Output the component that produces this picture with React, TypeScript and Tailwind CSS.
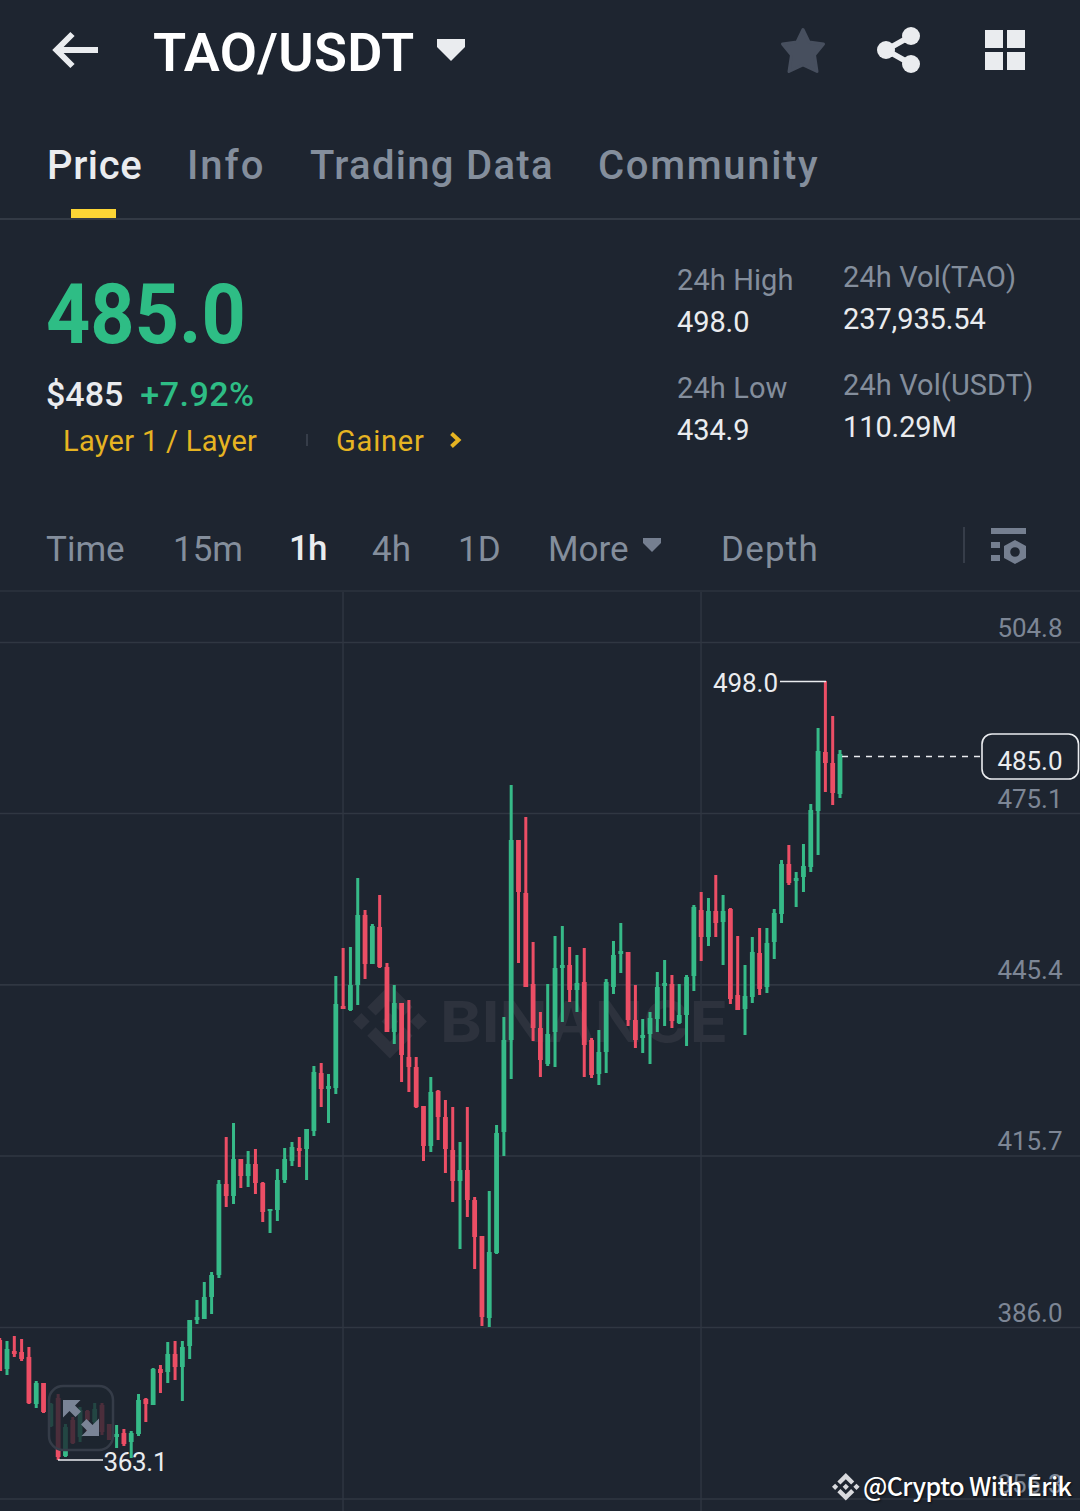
type Candle = [up: 0 | 1, high: number, low: number, top: number, bottom: number];

// one entry per hour: direction, wick range, body range
const candles: Candle[] = [
  [0, 1338, 1371, 1340, 1371],
  [1, 1341, 1375, 1349, 1369],
  [0, 1336, 1357, 1351, 1354],
  [0, 1339, 1361, 1352, 1359],
  [0, 1347, 1404, 1357, 1403],
  [1, 1381, 1408, 1383, 1404],
  [0, 1383, 1413, 1383, 1412],
  [1, 1403, 1427, 1404, 1426],
  [0, 1394, 1460, 1398, 1457],
  [1, 1424, 1457, 1427, 1456],
  [0, 1417, 1444, 1420, 1443],
  [1, 1407, 1442, 1410, 1437],
  [0, 1410, 1433, 1411, 1420],
  [1, 1403, 1430, 1409, 1422],
  [0, 1403, 1435, 1405, 1432],
  [0, 1424, 1440, 1424, 1440],
  [1, 1425, 1448, 1434, 1437],
  [0, 1429, 1446, 1433, 1444],
  [1, 1431, 1458, 1433, 1442],
  [1, 1394, 1436, 1400, 1434],
  [0, 1398, 1422, 1399, 1404],
  [1, 1368, 1405, 1369, 1405],
  [0, 1365, 1393, 1369, 1373],
  [1, 1342, 1383, 1354, 1372],
  [0, 1341, 1380, 1354, 1367],
  [1, 1341, 1401, 1347, 1367],
  [1, 1320, 1359, 1320, 1346],
  [1, 1300, 1324, 1317, 1320],
  [1, 1282, 1319, 1297, 1319],
  [1, 1272, 1314, 1275, 1297],
  [1, 1180, 1278, 1184, 1275],
  [0, 1137, 1207, 1184, 1196],
  [1, 1123, 1204, 1159, 1196],
  [0, 1159, 1188, 1159, 1176],
  [1, 1151, 1187, 1164, 1176],
  [0, 1149, 1194, 1164, 1183],
  [0, 1182, 1222, 1183, 1212],
  [1, 1209, 1233, 1209, 1211],
  [1, 1169, 1221, 1180, 1210],
  [1, 1148, 1183, 1159, 1180],
  [1, 1142, 1166, 1147, 1161],
  [0, 1137, 1167, 1148, 1151],
  [1, 1129, 1180, 1129, 1149],
  [1, 1066, 1136, 1072, 1131],
  [0, 1063, 1107, 1073, 1089],
  [1, 1074, 1123, 1086, 1089],
  [1, 976, 1094, 1004, 1088],
  [0, 948, 1009, 1006, 1009],
  [1, 947, 1011, 985, 1010],
  [1, 878, 1005, 915, 985],
  [0, 910, 979, 915, 964],
  [1, 924, 964, 926, 964],
  [0, 895, 968, 927, 967],
  [0, 963, 1032, 967, 1032],
  [1, 985, 1044, 1003, 1032],
  [0, 1003, 1082, 1003, 1055],
  [0, 1000, 1092, 1057, 1067],
  [0, 1057, 1108, 1067, 1107],
  [0, 1106, 1161, 1106, 1146],
  [1, 1077, 1152, 1092, 1146],
  [0, 1090, 1140, 1091, 1117],
  [0, 1100, 1173, 1117, 1149],
  [0, 1107, 1202, 1150, 1181],
  [1, 1142, 1249, 1170, 1181],
  [0, 1107, 1217, 1170, 1200],
  [0, 1197, 1269, 1200, 1237],
  [0, 1236, 1326, 1236, 1317],
  [1, 1191, 1327, 1252, 1318],
  [1, 1125, 1254, 1133, 1253],
  [1, 1017, 1156, 1040, 1132],
  [1, 785, 1079, 840, 1040],
  [0, 840, 963, 840, 892],
  [0, 817, 987, 893, 987],
  [0, 942, 1041, 984, 1028],
  [0, 1012, 1077, 1028, 1060],
  [1, 984, 1066, 1034, 1064],
  [1, 936, 1067, 968, 1032],
  [1, 926, 1022, 965, 968],
  [0, 947, 1002, 965, 990],
  [1, 955, 1012, 983, 990],
  [0, 948, 1077, 982, 1045],
  [0, 1038, 1078, 1040, 1075],
  [1, 1030, 1085, 1052, 1074],
  [1, 979, 1073, 982, 1052],
  [1, 941, 994, 955, 987],
  [1, 923, 973, 951, 954],
  [0, 952, 1026, 952, 1020],
  [0, 985, 1048, 1020, 1040],
  [1, 1019, 1053, 1035, 1038],
  [1, 1012, 1064, 1018, 1034],
  [1, 972, 1032, 987, 1019],
  [1, 960, 1026, 983, 986],
  [0, 975, 1028, 984, 1021],
  [1, 984, 1024, 1015, 1023],
  [1, 975, 1046, 977, 1015],
  [1, 905, 991, 907, 976],
  [0, 892, 961, 910, 937],
  [1, 898, 946, 911, 937],
  [0, 875, 937, 911, 923],
  [1, 895, 965, 911, 922],
  [0, 908, 1004, 909, 999],
  [0, 936, 1010, 995, 1010],
  [1, 965, 1035, 996, 1009],
  [1, 937, 1003, 952, 997],
  [0, 928, 995, 953, 989],
  [1, 928, 993, 943, 987],
  [1, 909, 959, 913, 942],
  [1, 860, 923, 864, 914],
  [0, 845, 885, 864, 883],
  [1, 872, 907, 878, 881],
  [1, 844, 892, 866, 877],
  [1, 804, 872, 810, 867],
  [1, 728, 855, 751, 811],
  [0, 681, 792, 752, 763],
  [0, 716, 805, 763, 793],
  [1, 750, 798, 754, 794],
];

const gridLines = [
  { y: 642.5, label: "504.8" },
  { y: 813.5, label: "475.1" },
  { y: 984.8, label: "445.4" },
  { y: 1156, label: "415.7" },
  { y: 1327.5, label: "386.0" },
  { y: 1499, label: "356.3" },
];

const tabs = [
  { name: "Price", style: "w-[94px] tracking-[0.6px]", active: true },
  { name: "Info", style: "w-[77px] tracking-[2px]" },
  { name: "Trading Data", style: "w-[242px] tracking-[1.3px]" },
  { name: "Community", style: "w-[220px] tracking-[1.7px]" },
];

const stats = [
  {
    box: "w-[166px] pt-[46px]",
    items: [
      { label: "24h High", value: "498.0" },
      { label: "24h Low", value: "434.9" },
    ],
  },
  {
    box: "w-[236px] pt-[43px]",
    items: [
      { label: "24h Vol(TAO)", value: "237,935.54" },
      { label: "24h Vol(USDT)", value: "110.29M" },
    ],
  },
];

const intervals = [
  { name: "Time", width: "w-[127px]" },
  { name: "15m", width: "w-[116px]" },
  { name: "1h", width: "w-[83px]", active: true },
  { name: "4h", width: "w-[86px]" },
  { name: "1D", width: "w-[90px]" },
];

const BINANCE =
  "M16.624 13.9202l2.7175 2.7154-7.353 7.353-7.353-7.352 2.7175-2.7164 4.6355 4.6595 4.6356-4.6595zm4.6366-4.6366L24 12l-2.7154 2.7164L18.5682 12l2.6924-2.7164zm-9.272.001l2.7163 2.6914-2.7164 2.7174v-.001L9.2721 12l2.7164-2.7154zm-9.2722-.001L5.4088 12l-2.6914 2.6924L0 12l2.7164-2.7164zM11.9885.0115l7.353 7.329-2.7174 2.7154-4.6356-4.6356-4.6355 4.6595-2.7174-2.7154 7.353-7.353z";

function Header() {
  return (
    <header className="flex h-[104px] items-center pb-1 pl-[52px] pr-[55px] text-[#eaecef]">
      <svg className="h-[38px] w-[46px]" viewBox="0 0 46 38" fill="none" stroke="currentColor" strokeWidth="6">
        <path d="M46 19H6M20.500 3L4.500 19l16 16" />
      </svg>
      <h1 className="ml-[55px] mt-[5px] w-[262px] whitespace-nowrap text-[54px] font-semibold leading-none tracking-[0.3px] text-white">
        TAO/USDT
      </h1>
      <svg className="ml-[22px] h-[22px] w-7" viewBox="0 0 28 22" fill="currentColor">
        <path d="M0 0h28v8L14 22 0 8z" />
      </svg>
      <svg
        className="ml-auto h-[47px] w-[46px] text-[#474f5e]"
        viewBox="0 0 46 47"
        fill="currentColor"
        stroke="currentColor"
        strokeWidth="3"
        strokeLinejoin="round"
      >
        <path d="M23 2.500l6 12.500 14.500 2-9 11 2.500 16.500-14-6.500-14 6.500 2.500-16.500-9-11 14.500-2z" />
      </svg>
      <svg className="ml-[51px] h-[46px] w-[43px]" viewBox="0 0 43 46" fill="currentColor">
        <path d="M34 9L9 23l25 14" fill="none" stroke="currentColor" strokeWidth="5.500" />
        <circle cx="9" cy="23" r="9" />
        <circle cx="34" cy="9" r="9" />
        <circle cx="34" cy="37" r="9" />
      </svg>
      <div className="ml-[65px] grid grid-cols-2 gap-1">
        <span className="size-[18px] bg-current" />
        <span className="size-[18px] bg-current" />
        <span className="size-[18px] bg-current" />
        <span className="size-[18px] bg-current" />
      </div>
    </header>
  );
}

function Tabs() {
  return (
    <nav className="flex h-[116px] gap-[46px] border-b-2 border-[#333a45] pl-[47px]">
      {tabs.map((tab) => (
        <div key={tab.name} className={`flex flex-col justify-between pt-[42px] ${tab.style}`}>
          <span
            className={`whitespace-nowrap text-[40px] font-medium leading-none ${
              tab.active ? "text-[#eaecef]" : "text-[#848e9c]"
            }`}
          >
            {tab.name}
          </span>
          {tab.active && <span className="ml-6 h-[9px] w-[45px] bg-[#fcd535]" />}
        </div>
      ))}
    </nav>
  );
}

function Summary() {
  return (
    <section className="flex h-[280px] leading-none">
      <div className="w-[677px] pl-[46px] pt-[53px]">
        <p className="origin-left scale-x-[.92] text-[84px] font-bold leading-none text-[#2ebd85]">485.0</p>
        <p className="mt-[20px] flex gap-[17px] text-[34px] font-medium leading-none text-[#eaecef]">
          <span>$485</span>
          <span className="tracking-[0.5px] text-[#2ebd85]">+7.92%</span>
        </p>
        <div className="mt-[16px] flex items-center pl-[17px] text-[29px] text-[#e6b422]">
          <span className="w-[243px] whitespace-nowrap tracking-[0.3px]">Layer 1 / Layer</span>
          <span className="-mt-1 h-3 w-[2px] bg-[#363d49]" />
          <span className="ml-[28px] w-[114px] tracking-[0.8px]">Gainer</span>
          <svg className="-mt-[3px] h-4 w-3" viewBox="0 0 12 16" fill="none" stroke="currentColor" strokeWidth="4">
            <path d="M1.500 1.500L8.500 8l-7 6.500" />
          </svg>
        </div>
      </div>
      {stats.map((column) => (
        <dl key={column.box} className={`flex flex-col gap-[37px] whitespace-nowrap text-[29px] ${column.box}`}>
          {column.items.map((item) => (
            <div key={item.label} className="flex flex-col gap-[13px]">
              <dt className="tracking-[0.1px] text-[#848e9c]">{item.label}</dt>
              <dd className="tracking-[-0.1px] text-[#eaecef]">{item.value}</dd>
            </div>
          ))}
        </dl>
      ))}
    </section>
  );
}

function Intervals() {
  return (
    <div className="flex h-[92px] items-start border-b-2 border-[#282f3a] pl-[46px] pt-[32px] text-[35px] leading-none text-[#848e9c]">
      {intervals.map((item) => (
        <span
          key={item.name}
          className={`${item.width} ${item.active ? "-mt-px font-medium tracking-[-1px] text-[#eaecef]" : ""}`}
        >
          {item.name}
        </span>
      ))}
      <span className="w-[95px]">More</span>
      <svg className="mt-[6px] h-[14px] w-[18px] text-[#757f90]" viewBox="0 0 18 14" fill="currentColor">
        <path d="M0 0h18v5L9 14 0 5z" />
      </svg>
      <span className="ml-[60px] tracking-[1.2px]">Depth</span>
      <span className="-mt-[5px] ml-auto h-9 w-[2px] bg-[#363d49]" />
      <svg
        className="-mt-[4px] ml-[26px] mr-[54px] h-9 w-[35px] text-[#757f90]"
        viewBox="0 0 35 36"
        fill="currentColor"
      >
        <path d="M0 0h35v6H0zM0 14h9v6H0zM0 27h9v6H0z" />
        <path fillRule="evenodd" d="M24 12l11 6v12l-11 6-11-6V18zM24 19.200a4.800 4.800 0 1 0 0 9.600 4.800 4.800 0 0 0 0-9.600z" />
      </svg>
    </div>
  );
}

function Chart() {
  return (
    <svg className="block h-[919px] w-full font-['Roboto',sans-serif] text-[26px]" viewBox="0 592 1080 919">
      <g stroke="#303742" strokeWidth="1.700">
        {gridLines.map((line) => (
          <path key={line.label} d={`M0 ${line.y}H1080`} />
        ))}
        <path d="M343 592V1511M701 592V1511" strokeWidth="1.400" />
      </g>

      <g fill="#2d323d">
        <path d={BINANCE} transform="translate(353 984.500) scale(3.080)" />
        <text
          x="440"
          y="1042"
          textLength="288"
          lengthAdjust="spacingAndGlyphs"
          className="font-['Inter',sans-serif] text-[56px] font-bold"
        >
          BINANCE
        </text>
      </g>

      {candles.map(([up, high, low, top, bottom], i) => {
        const x = 7 + (i - 1) * 7.307;
        return (
          <g key={i} fill={up ? "#36ba88" : "#ec4e65"}>
            <rect x={x - 1.5} y={high} width="3" height={low - high} />
            <rect x={x - 2.4} y={top} width="4.800" height={bottom - top} />
          </g>
        );
      })}

      <g fill="#7d8695">
        {gridLines.map((line) => (
          <text key={line.label} x="997.500" y={line.y - 6} textLength="65">
            {line.label}
          </text>
        ))}
      </g>

      {/* high and low markers */}
      <g fill="#eaecef">
        <text x="713" y="692" textLength="65">
          498.0
        </text>
        <text x="103.500" y="1471" textLength="64">
          363.1
        </text>
      </g>
      <path d="M780 681.500H826M58 1460H103" stroke="#eaecef" strokeWidth="1.600" />

      {/* last price */}
      <path d="M842 756.500H982" stroke="#eaecef" strokeWidth="1.400" strokeDasharray="6 6" />
      <rect x="982" y="734" width="96.500" height="45" rx="10" fill="#1e2530" stroke="#eaecef" strokeWidth="1.600" />
      <text x="997.500" y="770" textLength="65" fill="#eaecef">
        485.0
      </text>

      {/* fullscreen button */}
      <rect
        x="49"
        y="1386"
        width="64"
        height="64"
        rx="14"
        fill="#1e2530"
        fillOpacity=".78"
        stroke="#353c48"
        strokeWidth="2.500"
      />
      <g fill="#7a8496">
        <path d="M63 1400h17.500l-5.500 5.500 6 6-5.500 5.500-6-6-6.500 6.500z" />
        <path d="M99 1436h-17.500l5.500-5.500-6-6 5.500-5.500 6 6 6.500-6.500z" />
      </g>

      <path d={BINANCE} fill="#d9dade" transform="translate(832 1473) scale(1.150)" />
      <text
        x="863"
        y="1496"
        textLength="209"
        fill="#fff"
        className="font-['Noto_Sans_CJK_SC',sans-serif] text-[25px] font-medium [text-shadow:1px_1px_2px_#000a]"
      >
        @Crypto With Erik
      </text>
    </svg>
  );
}

export default function App() {
  return (
    <main className="h-[1511px] w-[1080px] overflow-hidden bg-[#1e2530] font-['Roboto',sans-serif]">
      <Header />
      <Tabs />
      <Summary />
      <Intervals />
      <Chart />
    </main>
  );
}
